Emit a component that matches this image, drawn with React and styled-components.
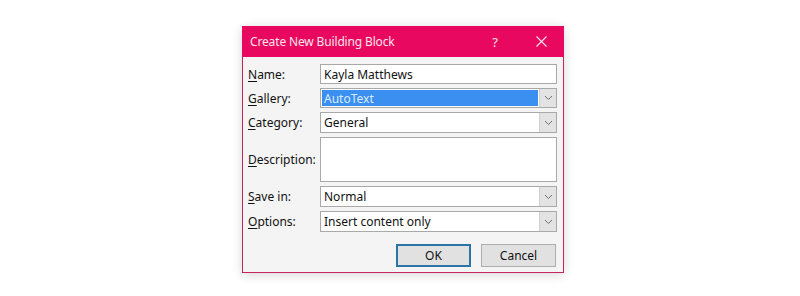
import React from "react";
import styled, { createGlobalStyle } from "styled-components";

const Global = createGlobalStyle`
  html, body { margin: 0; padding: 0; background: #ffffff; }
  body { font-family: "Noto Sans", "Open Sans", "Liberation Sans", sans-serif; }
`;

const Page = styled.div`
  width: 800px;
  height: 296px;
  padding: 26px 0 0 242px;
  box-sizing: border-box;
  background: #ffffff;
`;

const Dialog = styled.div`
  width: 322px;
  height: 247px;
  box-sizing: border-box;
  border: 1px solid #c4255f;
  background: #f4f4f4;
  box-shadow: 0 2px 10px rgba(0, 0, 0, 0.16);
  display: flex;
  flex-direction: column;
`;

const TitleBar = styled.div`
  height: 31px;
  background: #e8085f;
  color: #fbe3ec;
  display: flex;
  align-items: center;
  font-size: 12px;
  padding-left: 8px;
  margin: -1px -1px 0 -1px;
`;

const Title = styled.div`
  flex: 1;
  letter-spacing: -0.15px;
`;

const TitleButton = styled.div`
  width: 46px;
  height: 31px;
  display: flex;
  align-items: center;
  justify-content: center;
  color: #fbe3ec;
  font-size: 13px;
`;

const Body = styled.div`
  flex: 1;
  display: flex;
  flex-direction: column;
  padding: 7px 6px 0 5px;
`;

const Form = styled.div`
  display: grid;
  grid-template-columns: 72px 237px;
  row-gap: 4px;
  align-items: center;
`;

const Label = styled.label`
  font-size: 12px;
  color: #111;
  u { text-decoration: underline; text-underline-offset: 2px; }
`;

const Field = styled.div`
  height: ${(p) => p.$h || 20}px;
  box-sizing: border-box;
  border: 1px solid #a9a9a9;
  background: #ffffff;
  display: flex;
  align-items: center;
  font-size: 12px;
  color: #111;
`;

const Value = styled.div`
  flex: 1;
  display: flex;
  align-items: center;
  height: 100%;
  box-sizing: border-box;
  padding: ${(p) => (p.$selected ? "1px" : "0 0 0 3px")};
`;

const Highlight = styled.div`
  flex: 1;
  height: 100%;
  background: #3b8ff0;
  color: #d8ecff;
  padding-left: 2px;
  display: flex;
  align-items: center;
`;

const Arrow = styled.div`
  width: 17px;
  height: 100%;
  box-sizing: border-box;
  border-left: 1px solid #cfcfcf;
  background: #e3e3e3;
  display: flex;
  align-items: center;
  justify-content: center;
`;

const Buttons = styled.div`
  display: flex;
  justify-content: flex-end;
  gap: 10px;
  margin-top: 12px;
  padding-right: 1px;
`;

const Button = styled.div`
  width: 75px;
  height: 23px;
  box-sizing: border-box;
  border: ${(p) => (p.$default ? "2px solid #2a74a8" : "1px solid #adadad")};
  background: #e1e1e1;
  font-size: 12px;
  color: #111;
  display: flex;
  align-items: center;
  justify-content: center;
`;

const Chevron = () => (
  <svg width="9" height="6" viewBox="0 0 9 6">
    <path d="M1 1 L4.5 4.5 L8 1" fill="none" stroke="#707070" strokeWidth="1" />
  </svg>
);

const Select = ({ children, selected, h = 21 }) => (
  <Field $h={h}>
    <Value $selected={selected}>
      {selected ? <Highlight>{children}</Highlight> : children}
    </Value>
    <Arrow>
      <Chevron />
    </Arrow>
  </Field>
);

export default function App() {
  return (
    <Page>
      <Global />
      <Dialog>
        <TitleBar>
          <Title>Create New Building Block</Title>
          <TitleButton>?</TitleButton>
          <TitleButton>
            <svg width="11" height="11" viewBox="0 0 11 11">
              <path d="M0.5 0.5 L10.5 10.5 M10.5 0.5 L0.5 10.5" stroke="#fbe3ec" strokeWidth="1.1" />
            </svg>
          </TitleButton>
        </TitleBar>
        <Body>
          <Form>
            <Label><u>N</u>ame:</Label>
            <Field $h={20}>
              <Value>Kayla Matthews</Value>
            </Field>
            <Label><u>G</u>allery:</Label>
            <Select selected h={20}>AutoText</Select>
            <Label><u>C</u>ategory:</Label>
            <Select>General</Select>
            <Label><u>D</u>escription:</Label>
            <Field $h={45} />
            <Label><u>S</u>ave in:</Label>
            <Select>Normal</Select>
            <Label><u>O</u>ptions:</Label>
            <Select>Insert content only</Select>
          </Form>
          <Buttons>
            <Button $default>OK</Button>
            <Button>Cancel</Button>
          </Buttons>
        </Body>
      </Dialog>
    </Page>
  );
}
